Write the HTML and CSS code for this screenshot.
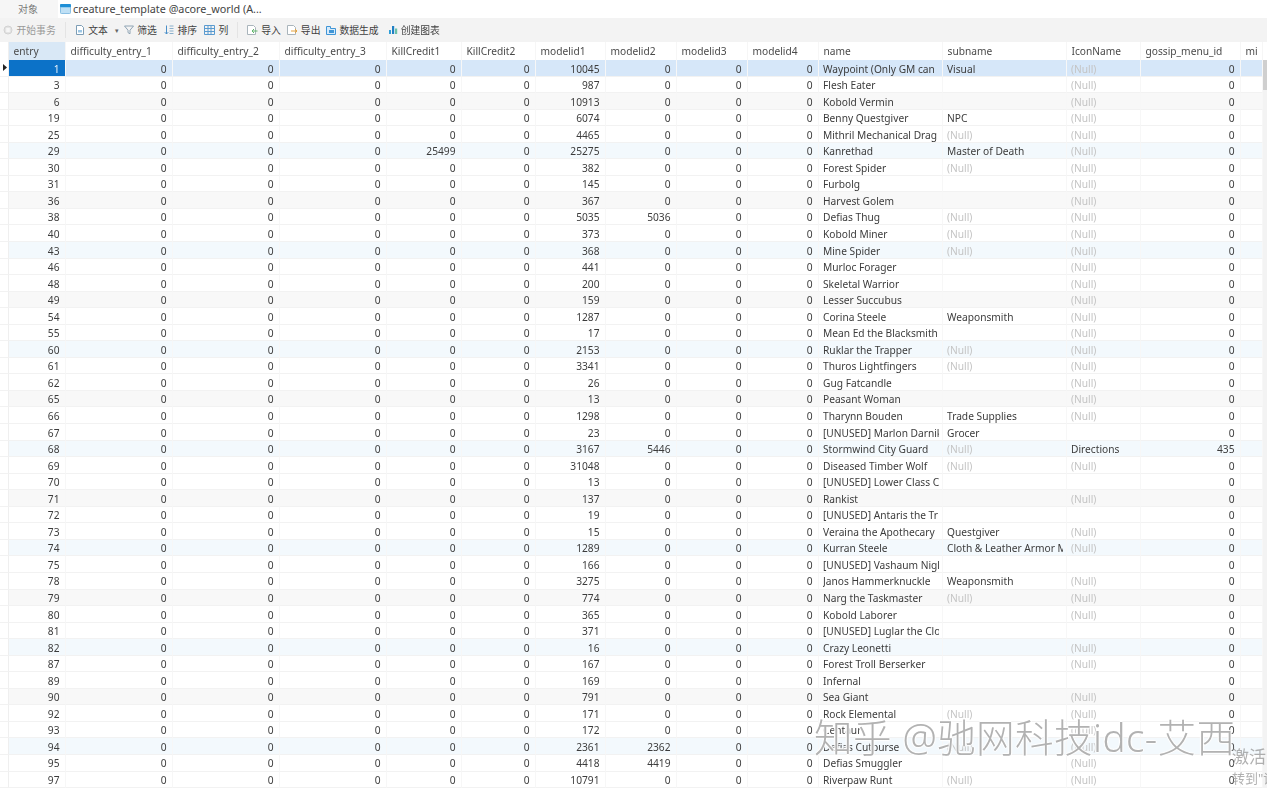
FILE: index.html
```html
<!DOCTYPE html>
<html lang="zh">
<head>
<meta charset="utf-8">
<title>creature_template @acore_world</title>
<link rel="stylesheet" href="styles.css">
</head>
<body>
<div class="app">
<nav class="tabs">
<span class="tab">对象</span>
<span class="tab active"><svg class="tabicon" viewBox="0 0 12 11"><rect x=".5" y=".5" width="11" height="10" rx="1" fill="#bfe0f5" stroke="#7fb9e0"/><rect x="0" y="0" width="12" height="3.5" rx="1" fill="#1f8fd6"/></svg>creature_template @acore_world (A...</span>
</nav>
<div class="toolbar">
<div class="group muted">
<span class="tool"><svg class="ic" viewBox="0 0 10 10"><circle cx="5" cy="5" r="4" fill="#e4e4e4" stroke="#d2d2d2"/><rect x="3.2" y="3" width="3.6" height="4" fill="#f6f6f6"/></svg>开始事务</span>
</div>
<i class="sep"></i>
<div class="group">
<span class="tool"><svg class="ic" viewBox="0 0 10 10"><path d="M1.5.5h5l2 2v7h-7z" fill="#fff" stroke="#7d9db5"/><path d="M3 5h4v2.5H3z" fill="#9cc6e4"/></svg>文本</span>
<span class="caret">▾</span>
<span class="tool"><svg class="ic" viewBox="0 0 10 10"><path d="M.5 1h9L6 5.2v3.6L4 7.6V5.2z" fill="none" stroke="#8fa4b4"/></svg>筛选</span>
<span class="tool"><svg class="ic" viewBox="0 0 10 10"><path d="M2.5 .5v8.5M.8 7.2l1.7 1.8 1.7-1.8" fill="none" stroke="#4a8fc8"/><path d="M5.5 1h4M5.5 3.5h4M5.5 6h4M5.5 8.5h4" stroke="#8ab0cc"/></svg>排序</span>
<span class="tool wide"><svg class="ic" viewBox="0 0 11 10"><path d="M.5.5h10v9H.5zM.5 3.5h10M.5 6.5h10M4 .5v9M7 .5v9" fill="none" stroke="#5a9bd0"/></svg>列</span>
</div>
<i class="sep"></i>
<div class="group exports">
<span class="tool wide"><svg class="ic" viewBox="0 0 11 10"><path d="M.5.5h6l2 2v7h-8z" fill="#fff" stroke="#a9b4bb"/><path d="M10.5 6H5M7 4 5 6l2 2" fill="none" stroke="#5fb56a"/></svg>导入</span>
<span class="tool wide"><svg class="ic" viewBox="0 0 11 10"><path d="M.5.5h6l2 2v7h-8z" fill="#fff" stroke="#a9b4bb"/><path d="M4 6h6M8 4l2 2-2 2" fill="none" stroke="#e8a33d"/></svg>导出</span>
<span class="tool"><svg class="ic" viewBox="0 0 10 10"><path d="M.5 1.5h4v2h5v6H.5z" fill="#d6eafa" stroke="#3f95d6"/><path d="M3 5h5v3H3z" fill="#3f95d6"/></svg>数据生成</span>
<span class="tool chart"><svg class="ic" viewBox="0 0 10 10"><path d="M1 5h2v4H1z" fill="#2f9fd8"/><path d="M4 1h2.200v8H4z" fill="#1f7fc4"/><path d="M7 3.500h2.200V9H7z" fill="#6cc0a8"/></svg>创建图表</span>
</div>
</div>
<div class="data">
<div class="scroller">
<table>
<colgroup><col class="w9"><col class="w57"><col class="w107"><col class="w107"><col class="w107"><col class="w75"><col class="w74"><col class="w70"><col class="w71"><col class="w71"><col class="w71"><col class="w124"><col class="w124"><col class="w74"><col class="w100"><col class="w22"></colgroup>
<thead><tr><th class="rh"><th class="cur">entry<th>difficulty_entry_1<th>difficulty_entry_2<th>difficulty_entry_3<th>KillCredit1<th>KillCredit2<th>modelid1<th>modelid2<th>modelid3<th>modelid4<th>name<th>subname<th>IconName<th>gossip_menu_id<th>mi</thead>
<tbody>
<tr class="sel"><td class="rh"><svg class="arrow" viewBox="0 0 4 7"><path d="M0 0l4 3.500L0 7z"/></svg><td class="pick">1<td>0<td>0<td>0<td>0<td>0<td>10045<td>0<td>0<td>0<td class="t">Waypoint (Only GM can<td class="t">Visual<td class="t n">(Null)<td>0<td>
<tr><td class="rh"><td>3<td>0<td>0<td>0<td>0<td>0<td>987<td>0<td>0<td>0<td class="t">Flesh Eater<td class="t"><td class="t n">(Null)<td>0<td>
<tr><td class="rh"><td>6<td>0<td>0<td>0<td>0<td>0<td>10913<td>0<td>0<td>0<td class="t">Kobold Vermin<td class="t"><td class="t n">(Null)<td>0<td>
<tr><td class="rh"><td>19<td>0<td>0<td>0<td>0<td>0<td>6074<td>0<td>0<td>0<td class="t">Benny Questgiver<td class="t">NPC<td class="t n">(Null)<td>0<td>
<tr><td class="rh"><td>25<td>0<td>0<td>0<td>0<td>0<td>4465<td>0<td>0<td>0<td class="t">Mithril Mechanical Drag<td class="t n">(Null)<td class="t n">(Null)<td>0<td>
<tr><td class="rh"><td>29<td>0<td>0<td>0<td>25499<td>0<td>25275<td>0<td>0<td>0<td class="t">Kanrethad<td class="t">Master of Death<td class="t n">(Null)<td>0<td>
<tr><td class="rh"><td>30<td>0<td>0<td>0<td>0<td>0<td>382<td>0<td>0<td>0<td class="t">Forest Spider<td class="t n">(Null)<td class="t n">(Null)<td>0<td>
<tr><td class="rh"><td>31<td>0<td>0<td>0<td>0<td>0<td>145<td>0<td>0<td>0<td class="t">Furbolg<td class="t"><td class="t n">(Null)<td>0<td>
<tr><td class="rh"><td>36<td>0<td>0<td>0<td>0<td>0<td>367<td>0<td>0<td>0<td class="t">Harvest Golem<td class="t"><td class="t n">(Null)<td>0<td>
<tr><td class="rh"><td>38<td>0<td>0<td>0<td>0<td>0<td>5035<td>5036<td>0<td>0<td class="t">Defias Thug<td class="t n">(Null)<td class="t n">(Null)<td>0<td>
<tr><td class="rh"><td>40<td>0<td>0<td>0<td>0<td>0<td>373<td>0<td>0<td>0<td class="t">Kobold Miner<td class="t n">(Null)<td class="t n">(Null)<td>0<td>
<tr><td class="rh"><td>43<td>0<td>0<td>0<td>0<td>0<td>368<td>0<td>0<td>0<td class="t">Mine Spider<td class="t n">(Null)<td class="t n">(Null)<td>0<td>
<tr><td class="rh"><td>46<td>0<td>0<td>0<td>0<td>0<td>441<td>0<td>0<td>0<td class="t">Murloc Forager<td class="t"><td class="t n">(Null)<td>0<td>
<tr><td class="rh"><td>48<td>0<td>0<td>0<td>0<td>0<td>200<td>0<td>0<td>0<td class="t">Skeletal Warrior<td class="t"><td class="t n">(Null)<td>0<td>
<tr><td class="rh"><td>49<td>0<td>0<td>0<td>0<td>0<td>159<td>0<td>0<td>0<td class="t">Lesser Succubus<td class="t"><td class="t n">(Null)<td>0<td>
<tr><td class="rh"><td>54<td>0<td>0<td>0<td>0<td>0<td>1287<td>0<td>0<td>0<td class="t">Corina Steele<td class="t">Weaponsmith<td class="t n">(Null)<td>0<td>
<tr><td class="rh"><td>55<td>0<td>0<td>0<td>0<td>0<td>17<td>0<td>0<td>0<td class="t">Mean Ed the Blacksmith<td class="t"><td class="t n">(Null)<td>0<td>
<tr><td class="rh"><td>60<td>0<td>0<td>0<td>0<td>0<td>2153<td>0<td>0<td>0<td class="t">Ruklar the Trapper<td class="t n">(Null)<td class="t n">(Null)<td>0<td>
<tr><td class="rh"><td>61<td>0<td>0<td>0<td>0<td>0<td>3341<td>0<td>0<td>0<td class="t">Thuros Lightfingers<td class="t n">(Null)<td class="t n">(Null)<td>0<td>
<tr><td class="rh"><td>62<td>0<td>0<td>0<td>0<td>0<td>26<td>0<td>0<td>0<td class="t">Gug Fatcandle<td class="t"><td class="t n">(Null)<td>0<td>
<tr><td class="rh"><td>65<td>0<td>0<td>0<td>0<td>0<td>13<td>0<td>0<td>0<td class="t">Peasant Woman<td class="t"><td class="t n">(Null)<td>0<td>
<tr><td class="rh"><td>66<td>0<td>0<td>0<td>0<td>0<td>1298<td>0<td>0<td>0<td class="t">Tharynn Bouden<td class="t">Trade Supplies<td class="t n">(Null)<td>0<td>
<tr><td class="rh"><td>67<td>0<td>0<td>0<td>0<td>0<td>23<td>0<td>0<td>0<td class="t">[UNUSED] Marlon Darnik<td class="t">Grocer<td class="t"><td>0<td>
<tr><td class="rh"><td>68<td>0<td>0<td>0<td>0<td>0<td>3167<td>5446<td>0<td>0<td class="t">Stormwind City Guard<td class="t n">(Null)<td class="t">Directions<td>435<td>
<tr><td class="rh"><td>69<td>0<td>0<td>0<td>0<td>0<td>31048<td>0<td>0<td>0<td class="t">Diseased Timber Wolf<td class="t n">(Null)<td class="t n">(Null)<td>0<td>
<tr><td class="rh"><td>70<td>0<td>0<td>0<td>0<td>0<td>13<td>0<td>0<td>0<td class="t">[UNUSED] Lower Class C<td class="t"><td class="t"><td>0<td>
<tr><td class="rh"><td>71<td>0<td>0<td>0<td>0<td>0<td>137<td>0<td>0<td>0<td class="t">Rankist<td class="t"><td class="t n">(Null)<td>0<td>
<tr><td class="rh"><td>72<td>0<td>0<td>0<td>0<td>0<td>19<td>0<td>0<td>0<td class="t">[UNUSED] Antaris the Tr<td class="t"><td class="t"><td>0<td>
<tr><td class="rh"><td>73<td>0<td>0<td>0<td>0<td>0<td>15<td>0<td>0<td>0<td class="t">Veraina the Apothecary<td class="t">Questgiver<td class="t n">(Null)<td>0<td>
<tr><td class="rh"><td>74<td>0<td>0<td>0<td>0<td>0<td>1289<td>0<td>0<td>0<td class="t">Kurran Steele<td class="t">Cloth &amp; Leather Armor M<td class="t n">(Null)<td>0<td>
<tr><td class="rh"><td>75<td>0<td>0<td>0<td>0<td>0<td>166<td>0<td>0<td>0<td class="t">[UNUSED] Vashaum Nigh<td class="t"><td class="t"><td>0<td>
<tr><td class="rh"><td>78<td>0<td>0<td>0<td>0<td>0<td>3275<td>0<td>0<td>0<td class="t">Janos Hammerknuckle<td class="t">Weaponsmith<td class="t n">(Null)<td>0<td>
<tr><td class="rh"><td>79<td>0<td>0<td>0<td>0<td>0<td>774<td>0<td>0<td>0<td class="t">Narg the Taskmaster<td class="t n">(Null)<td class="t n">(Null)<td>0<td>
<tr><td class="rh"><td>80<td>0<td>0<td>0<td>0<td>0<td>365<td>0<td>0<td>0<td class="t">Kobold Laborer<td class="t"><td class="t n">(Null)<td>0<td>
<tr><td class="rh"><td>81<td>0<td>0<td>0<td>0<td>0<td>371<td>0<td>0<td>0<td class="t">[UNUSED] Luglar the Clo<td class="t"><td class="t"><td>0<td>
<tr><td class="rh"><td>82<td>0<td>0<td>0<td>0<td>0<td>16<td>0<td>0<td>0<td class="t">Crazy Leonetti<td class="t"><td class="t n">(Null)<td>0<td>
<tr><td class="rh"><td>87<td>0<td>0<td>0<td>0<td>0<td>167<td>0<td>0<td>0<td class="t">Forest Troll Berserker<td class="t"><td class="t n">(Null)<td>0<td>
<tr><td class="rh"><td>89<td>0<td>0<td>0<td>0<td>0<td>169<td>0<td>0<td>0<td class="t">Infernal<td class="t"><td class="t"><td>0<td>
<tr><td class="rh"><td>90<td>0<td>0<td>0<td>0<td>0<td>791<td>0<td>0<td>0<td class="t">Sea Giant<td class="t"><td class="t n">(Null)<td>0<td>
<tr><td class="rh"><td>92<td>0<td>0<td>0<td>0<td>0<td>171<td>0<td>0<td>0<td class="t">Rock Elemental<td class="t n">(Null)<td class="t n">(Null)<td>0<td>
<tr><td class="rh"><td>93<td>0<td>0<td>0<td>0<td>0<td>172<td>0<td>0<td>0<td class="t">Centaur<td class="t"><td class="t n">(Null)<td>0<td>
<tr><td class="rh"><td>94<td>0<td>0<td>0<td>0<td>0<td>2361<td>2362<td>0<td>0<td class="t">Defias Cutpurse<td class="t n">(Null)<td class="t n">(Null)<td>0<td>
<tr><td class="rh"><td>95<td>0<td>0<td>0<td>0<td>0<td>4418<td>4419<td>0<td>0<td class="t">Defias Smuggler<td class="t"><td class="t n">(Null)<td>0<td>
<tr><td class="rh"><td>97<td>0<td>0<td>0<td>0<td>0<td>10791<td>0<td>0<td>0<td class="t">Riverpaw Runt<td class="t n">(Null)<td class="t n">(Null)<td>0<td>
</tbody>
</table>
</div>
<div class="vbar"><div class="thumb"></div></div>
</div>
<div class="watermark">知乎 @驰网科技idc-艾西</div>
<div class="activate"><span class="a1">激活</span><span class="a2">转到"设</span></div>
</div>
</body>
</html>
```
FILE: styles.css
```css
html, body { margin: 0; padding: 0; background: #fff; }
.app {
  position: relative;
  width: 1267px;
  height: 788px;
  overflow: hidden;
  font-family: "Noto Sans", "Noto Sans CJK SC", sans-serif;
  font-size: 10.2px;
  color: #3c3c3c;
  filter: blur(.35px);
  display: flex;
  flex-direction: column;
}
.tabs { display: flex; height: 18px; flex: none; background: #fff; }
.tab { display: flex; align-items: center; line-height: 16px; white-space: nowrap; }
.tab:first-child { width: 58px; padding-left: 18px; box-sizing: border-box; background: #f6f6f6; color: #777; font-size: 10px; }
.tab.active { width: 202px; padding-left: 2px; box-sizing: border-box; background: #fff; font-size: 10.8px; color: #444; gap: 2px; }
.tabicon { width: 11px; height: 10px; flex: none; }
.toolbar {
  display: flex;
  align-items: center;
  height: 24px;
  flex: none;
  padding-left: 3px;
  background: #f3f3f3;
  font-size: 9.8px;
  color: #3f3f3f;
}
.group { display: flex; align-items: center; gap: 7px; }
.muted { color: #999; }
.sep { width: 1px; height: 16px; background: #e4e4e4; margin: 0 9px; }
.tool { display: flex; align-items: center; gap: 3.5px; white-space: nowrap; }
.exports { gap: 6px; }
.exports .tool { gap: 3px; }
.exports .chart { margin-left: 3px; }
.ic { width: 10px; height: 10px; flex: none; }
.wide .ic { width: 11px; }
.caret { font-size: 7px; color: #666; margin-right: -2px; }
.data { display: flex; flex: 1; min-height: 0; }
.scroller { width: 1263px; flex: none; overflow: hidden; }
.vbar { flex: 1; margin-top: 18px; background: #f3f3f3; }
.thumb { height: 30px; background: #cfcfcf; }
table { table-layout: fixed; width: 1263px; border-collapse: separate; border-spacing: 0; }
.w9 { width: 9px; } .w57 { width: 57px; } .w107 { width: 107px; } .w75 { width: 75px; }
.w74 { width: 74px; } .w70 { width: 70px; } .w71 { width: 71px; } .w124 { width: 124px; }
.w100 { width: 100px; } .w22 { width: 22px; }
th, td {
  box-sizing: border-box;
  padding: 0 5.5px 0 4px;
  white-space: nowrap;
  overflow: clip;
  overflow-clip-margin: content-box;
  font-weight: 400;
}
th {
  height: 18px;
  line-height: 15px;
  text-align: left;
  color: #4a4a4a;
  border-right: 1px solid #f6f6f6;
  padding-left: 4.5px;
}
th.cur { background: #d9e8f6; }
td {
  height: 16.56px;
  line-height: 14px;
  padding-top: 1.5px;
  text-align: right;
  border-right: 1px solid #f7f7f7;
  border-bottom: 1px solid #f2f2f2;
}
td.t { text-align: left; padding-right: 3px; }
td.n { color: #c4c4c4; }
.rh { padding: 0; border-right: 1px solid #efefef; background: #fff; text-align: left; }
td.rh { vertical-align: middle; }
.arrow { display: block; width: 4px; height: 7px; margin-left: 3px; fill: #222; }
tbody tr:nth-child(6n) td:not(.rh) { background: #f3f9fd; }
tbody tr:nth-child(6n+3) td:not(.rh) { background: #f8f8f8; }
tr.sel td:not(.rh) { background: #d6e7f9; }
tr.sel td.pick { background: #0c72c8; color: #e8f3fc; }
.watermark {
  position: absolute;
  left: 814px;
  top: 715px;
  font-size: 38.6px;
  line-height: 44px;
  white-space: nowrap;
  color: rgba(170, 170, 170, .9);
  text-shadow: 1px 0 1px #fff, -1px 0 1px #fff, 0 1px 1px #fff, 0 -1px 1px #fff, 0 0 3px #fff;
  letter-spacing: .4px;
  font-weight: 300;
}
.activate {
  position: absolute;
  left: 1232px;
  top: 746px;
  display: flex;
  flex-direction: column;
  color: rgba(150, 150, 150, .75);
  white-space: nowrap;
}
.a1 { font-size: 17px; line-height: 22px; }
.a2 { font-size: 13px; line-height: 18px; margin-top: 1px; }
```
